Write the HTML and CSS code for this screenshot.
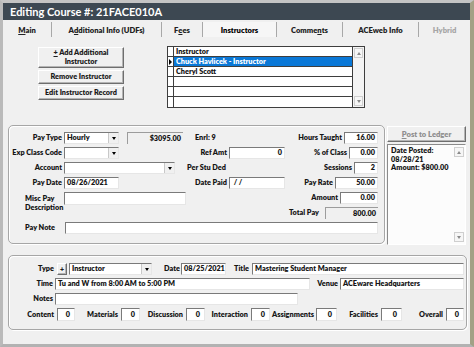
FILE: index.html
```html
<!DOCTYPE html>
<html lang="en">
<head>
    <meta charset="UTF-8">
    <meta name="viewport" content="width=device-width, initial-scale=1.0">
    <title>Editing Course</title>
    <link rel="stylesheet" href="styles.css">
</head>
<body>
    <div class="window">
        <div class="titlebar">Editing Course #: 21FACE010A</div>

        <div class="tabs">
            <div class="tab w-main"><u>M</u>ain</div>
            <div class="tab w-udf">A<u>d</u>ditional Info (UDFs)</div>
            <div class="tab w-fees">F<u>e</u>es</div>
            <div class="tab w-instr active">Instructors</div>
            <div class="tab w-comm">Comme<u>n</u>ts</div>
            <div class="tab w-web">ACEweb Info</div>
            <div class="tab w-hyb disabled">Hybrid</div>
        </div>

        <div class="content">
            <div class="top">
                <div class="btns">
                    <button class="btn tall"><span><u>+</u> Add Additional<br>Instructor</span></button>
                    <button class="btn">Remove Instructor</button>
                    <button class="btn">Edit Instructor Record</button>
                </div>

                <div class="grid">
                    <div class="grid-body">
                        <div class="grow head"><span class="sel"></span><span class="cell">Instructor</span></div>
                        <div class="grow current"><span class="sel"><i class="marker"></i></span><span class="cell">Chuck Havlicek - Instructor</span></div>
                        <div class="grow"><span class="sel"></span><span class="cell">Cheryl Scott</span></div>
                        <div class="grow"><span class="sel"></span><span class="cell"></span></div>
                        <div class="grow"><span class="sel"></span><span class="cell"></span></div>
                        <div class="grow last"><span class="sel"></span><span class="cell"></span></div>
                    </div>
                    <div class="vscroll">
                        <span class="sbtn"><i class="tri up"></i></span>
                        <span class="sbtn"><i class="tri down"></i></span>
                    </div>
                </div>
            </div>

            <div class="middle">
                <div class="panel pay">
                    <div class="row">
                        <label class="lab w53">Pay Type</label>
                        <div class="field combo w55"><span class="val">Hourly</span><span class="drop"></span></div>
                        <div class="ro w56 ml8">$3095.00</div>
                        <span class="plain ml12">Enrl: 9</span>
                        <div class="right">
                            <label class="rlab">Hours Taught</label>
                            <div class="field num w34">16.00</div>
                        </div>
                    </div>
                    <div class="row">
                        <label class="lab w53">Exp Class Code</label>
                        <div class="field combo w55"><span class="val"></span><span class="drop"></span></div>
                        <label class="lab w108">Ref Amt</label>
                        <div class="field num w56">0</div>
                        <div class="right">
                            <label class="rlab">% of Class</label>
                            <div class="field num w29">0.00</div>
                        </div>
                    </div>
                    <div class="row">
                        <label class="lab w53">Account</label>
                        <div class="field combo w111"><span class="val"></span><span class="drop"></span></div>
                        <span class="plain ml12">Per Stu Ded</span>
                        <div class="right">
                            <label class="rlab">Sessions</label>
                            <div class="field num w24">2</div>
                        </div>
                    </div>
                    <div class="row">
                        <label class="lab w53">Pay Date</label>
                        <div class="field w55">08/26/2021</div>
                        <label class="lab w108">Date Paid</label>
                        <div class="field w56">&nbsp;/ /</div>
                        <div class="right">
                            <label class="rlab">Pay Rate</label>
                            <div class="field num w43">50.00</div>
                        </div>
                    </div>
                    <div class="row double">
                        <label class="lab w53 misc">Misc Pay<br>Description</label>
                        <div class="field memo w122"></div>
                        <div class="right stack">
                            <div class="subrow">
                                <label class="rlab">Amount</label>
                                <div class="field num w38">0.00</div>
                            </div>
                            <div class="subrow">
                                <label class="rlab gap6">Total Pay</label>
                                <div class="ro w53">800.00</div>
                            </div>
                        </div>
                    </div>
                    <div class="row">
                        <label class="lab w46 note">Pay Note</label>
                        <div class="field grow-1"></div>
                    </div>
                </div>

                <div class="ledger">
                    <button class="btn post" disabled><u>P</u>ost to Ledger</button>
                    <div class="postlist">
                        <div class="postlines">Date Posted:<br>08/28/21<br>Amount: $800.00</div>
                        <div class="vscroll flat">
                            <span class="sbtn"><i class="tri up"></i></span>
                            <span class="sbtn"><i class="tri down"></i></span>
                        </div>
                    </div>
                </div>
            </div>

            <div class="panel session">
                <div class="row">
                    <label class="lab w45 mr3">Type</label>
                    <button class="btn mini">+</button>
                    <div class="field combo w83 ml2"><span class="val">Instructor</span><span class="drop"></span></div>
                    <label class="lab w28 mr1">Date</label>
                    <div class="field w45">08/25/2021</div>
                    <label class="lab w23 mr3">Title</label>
                    <div class="field grow-1">Mastering Student Manager</div>
                </div>
                <div class="row">
                    <label class="lab w44">Time</label>
                    <div class="field w255">Tu and W from 8:00 AM to 5:00 PM</div>
                    <label class="lab w28">Venue</label>
                    <div class="field grow-1">ACEware Headquarters</div>
                </div>
                <div class="row">
                    <label class="lab w44">Notes</label>
                    <div class="field w243"></div>
                </div>
                <div class="row scores">
                    <label class="lab w45 mr3">Content</label>
                    <div class="field num w18">0</div>
                    <label class="lab w43 mr3">Materials</label>
                    <div class="field num w19">0</div>
                    <label class="lab w43 mr3">Discussion</label>
                    <div class="field num w19">0</div>
                    <label class="lab w43 mr3">Interaction</label>
                    <div class="field num w19">0</div>
                    <label class="lab w44">Assignments</label>
                    <div class="field num w21">0</div>
                    <label class="lab w41 mr3">Facilities</label>
                    <div class="field num w21">0</div>
                    <label class="lab w41 mr3">Overall</label>
                    <div class="field num w18">0</div>
                </div>
            </div>
        </div>
    </div>
</body>
</html>
```

FILE: styles.css
```css
* {
    box-sizing: border-box;
}

body {
    margin: 0;
    background-color: #f0f0f0;
    font-family: Lato, "Liberation Sans", sans-serif;
    font-weight: 800;
    font-size: 7.3px;
    color: #161616;
}

.window {
    width: 474px;
    height: 347px;
    border-top: 3px solid #c4c4c4;
    border-left: 3px solid #bababa;
    border-right: 4px solid #a3a186;
    border-bottom: 3px solid #b2b2b2;
    background-color: #f0f0f0;
    overflow: hidden;
}

.titlebar {
    height: 17px;
    line-height: 17px;
    padding-left: 7px;
    background-color: #3d4852;
    color: #fff;
    font-size: 11px;
    font-weight: 700;
}

/* tab strip */
.tabs {
    display: flex;
    height: 18px;
}

.tab {
    display: flex;
    align-items: center;
    justify-content: center;
    margin: 2px 0 1px;
    border-right: 1px solid #a8a8a8;
    font-size: 7.6px;
    color: #222;
}

.tab.active {
    background-color: #f6f6f6;
    color: #000;
}

.tab.disabled {
    color: #a6a6a6;
    border-right: none;
}

.w-main { width: 49px; }
.w-udf { width: 110px; }
.w-fees { width: 41px; }
.w-instr { width: 74px; }
.w-comm { width: 66px; }
.w-web { width: 76px; }
.w-hyb { width: 51px; }

/* buttons */
.btn {
    display: flex;
    align-items: center;
    justify-content: center;
    padding: 0;
    margin: 0;
    font: inherit;
    color: #1c1c1c;
    background-color: #f0f0f0;
    border: 1px solid #fff;
    border-right-color: #6e6e6e;
    border-bottom-color: #6e6e6e;
    box-shadow: inset -1px -1px 0 #b4b4b4;
    line-height: 8.5px;
    text-align: center;
}

/* top section */
.top {
    display: flex;
    height: 87px;
}

.btns {
    display: flex;
    flex-direction: column;
    gap: 2px;
    width: 86px;
    margin: 9px 0 0 35px;
}

.btns .btn {
    height: 14px;
}

.btns .btn.tall {
    height: 21px;
}

.grid {
    display: flex;
    width: 198px;
    height: 62px;
    margin: 8px 0 0 43px;
    border: 1px solid #3e3e3e;
    background-color: #fff;
}

.grid-body {
    flex: 1;
}

.grow {
    display: flex;
    height: 10px;
    border-bottom: 1px solid #3e3e3e;
}

.grow.last {
    border-bottom: none;
}

.sel {
    display: flex;
    align-items: center;
    width: 6px;
    border-right: 1px solid #3e3e3e;
}

.marker {
    width: 0;
    height: 0;
    margin-left: 1px;
    border-left: 3px solid #000;
    border-top: 3px solid transparent;
    border-bottom: 3px solid transparent;
}

.cell {
    flex: 1;
    padding-left: 2px;
    line-height: 9px;
    white-space: nowrap;
}

.grow.current .cell {
    background-color: #0a78d7;
    color: #fff;
}

.vscroll {
    display: flex;
    flex-direction: column;
    justify-content: space-between;
    width: 12px;
    padding: 1px;
    border-left: 1px solid #3e3e3e;
    background-color: #f4f4f4;
}

.vscroll.flat {
    border-left: none;
    background-color: #fcfcfc;
    padding: 2px 1px;
}

.sbtn {
    display: flex;
    align-items: center;
    justify-content: center;
    height: 10px;
    border: 1px solid #cfcfcf;
    background-color: #f6f6f6;
}

.tri {
    width: 0;
    height: 0;
    border-left: 2.5px solid transparent;
    border-right: 2.5px solid transparent;
}

.tri.up {
    border-bottom: 3px solid #8a8a8a;
}

.tri.down {
    border-top: 3px solid #8a8a8a;
}

/* middle section */
.middle {
    display: flex;
    height: 120px;
}

.panel {
    border: 1px solid #a6a6a6;
    border-radius: 5px;
    box-shadow: inset 1px 1px 0 #fff, 1px 1px 0 #fff;
}

.pay {
    width: 377px;
    height: 119px;
    margin-left: 5px;
    padding: 6px 6px 0 0;
}

.row {
    display: flex;
    align-items: flex-start;
    height: 15px;
}

.row.double {
    height: 30px;
}

.lab {
    flex: none;
    margin-right: 2px;
    line-height: 12px;
    text-align: right;
    white-space: nowrap;
}

.lab.misc {
    padding: 2px 0 0 16px;
    line-height: 9px;
    text-align: left;
}

.lab.note {
    margin-right: 10px;
}

.plain {
    line-height: 12px;
    white-space: nowrap;
}

.right {
    display: flex;
    margin-left: auto;
}

.right.stack {
    flex-direction: column;
}

.subrow {
    display: flex;
    justify-content: flex-end;
    height: 15px;
}

.rlab {
    margin-right: 2px;
    line-height: 12px;
    white-space: nowrap;
}

.rlab.gap6 {
    margin-right: 6px;
}

.field {
    flex: none;
    height: 12px;
    padding: 0 2px;
    line-height: 10px;
    background-color: #fff;
    border: 1px solid #e6e6e6;
    border-top-color: #7a7a7a;
    border-left-color: #7a7a7a;
    white-space: nowrap;
    overflow: hidden;
}

.field.num {
    text-align: right;
}

.field.memo {
    height: 13px;
}

.field.grow-1 {
    flex: 1;
}

.combo {
    display: flex;
    padding-right: 0;
}

.combo .val {
    flex: 1;
}

.drop {
    display: flex;
    align-items: center;
    justify-content: center;
    width: 10px;
    height: 10px;
    background-color: #f0f0f0;
    border-left: 1px solid #c8c8c8;
}

.drop::after {
    content: "";
    width: 0;
    height: 0;
    border-left: 2.5px solid transparent;
    border-right: 2.5px solid transparent;
    border-top: 3px solid #000;
}

.ro {
    flex: none;
    height: 12px;
    padding-right: 2px;
    line-height: 11px;
    text-align: right;
    border-top: 1px solid #9c9c9c;
    border-left: 1px solid #9c9c9c;
}

/* ledger column */
.ledger {
    display: flex;
    flex-direction: column;
    width: 79px;
    margin-left: 2px;
}

.btn.post {
    height: 16px;
    margin-top: 1px;
    color: #8e8e8e;
    font-size: 7.6px;
}

.postlist {
    display: flex;
    height: 101px;
    margin-top: 2px;
    background-color: #fcfcfc;
    border: 1px solid #fff;
    border-top-color: #8a8a8a;
    border-left-color: #8a8a8a;
}

.postlines {
    flex: 1;
    padding: 2px 0 0 3px;
    line-height: 8.7px;
}

/* bottom panel */
.session {
    width: 459px;
    height: 75px;
    margin: 10px 0 0 5px;
    padding: 7px 2px 0 0;
}

.row.scores .field {
    height: 13px;
    line-height: 11px;
    padding-right: 4px;
}

.row.scores .lab {
    line-height: 13px;
}

.btn.mini {
    width: 10px;
    height: 12px;
    font-size: 7px;
}

.ml2 { margin-left: 2px; }
.ml8 { margin-left: 8px; }
.ml12 { margin-left: 12px; }
.mr1 { margin-right: 1px; }
.mr3 { margin-right: 3px; }

.w18 { width: 18px; }
.w19 { width: 19px; }
.w21 { width: 21px; }
.w23 { width: 23px; }
.w24 { width: 24px; }
.w28 { width: 28px; }
.w29 { width: 29px; }
.w34 { width: 34px; }
.w38 { width: 38px; }
.w41 { width: 41px; }
.w43 { width: 43px; }
.w44 { width: 44px; }
.w45 { width: 45px; }
.w46 { width: 46px; }
.w53 { width: 53px; }
.w55 { width: 55px; }
.w56 { width: 56px; }
.w83 { width: 83px; }
.w108 { width: 108px; }
.w111 { width: 111px; }
.w122 { width: 122px; }
.w243 { width: 243px; }
.w255 { width: 255px; }
```
